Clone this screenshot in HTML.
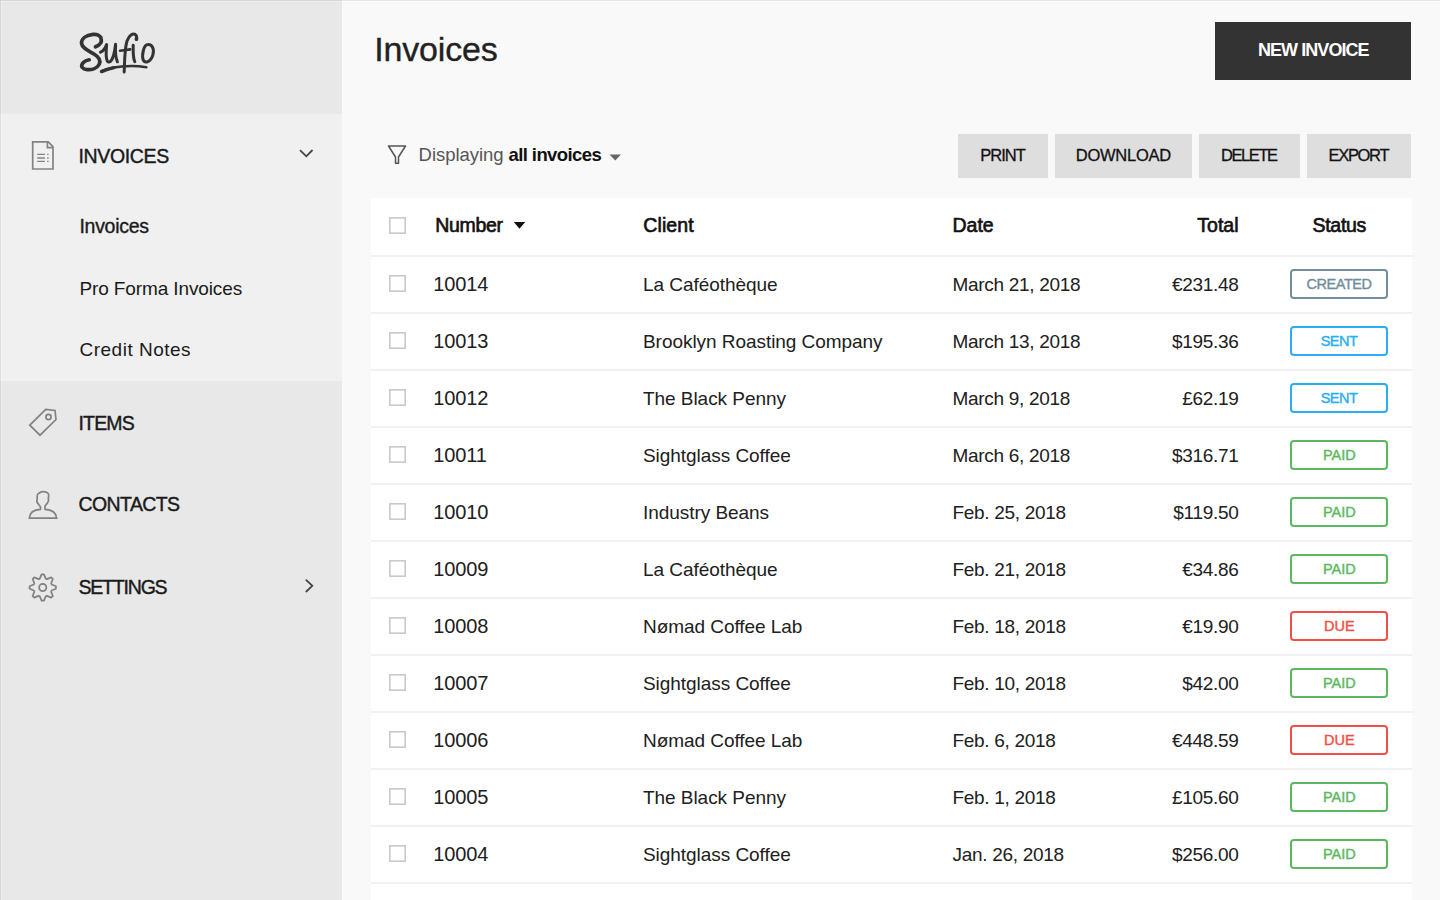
<!DOCTYPE html>
<html><head><meta charset="utf-8"><title>Invoices</title>
<style>
html,body{margin:0;padding:0;}
body{width:1440px;height:900px;position:relative;overflow:hidden;background:#f9f9f9;font-family:"Liberation Sans", sans-serif;}
.t{position:absolute;white-space:nowrap;}
b{font-weight:700;}
</style></head><body>
<div style="position:absolute;left:0px;top:0px;width:342px;height:900px;background:#e8e8e8;"></div>
<div style="position:absolute;left:0px;top:114px;width:342px;height:267px;background:#f0f0f0;"></div>
<div style="position:absolute;left:371px;top:198px;width:1041px;height:702px;background:#ffffff;"></div>
<svg style="position:absolute;left:0;top:0" width="342" height="114" viewBox="0 0 342 114">
<g fill="none" stroke="#333" stroke-linecap="round" stroke-linejoin="round">
<path d="M95.5 46.8 C 99.5 45.2, 102 42.5, 101.2 39 C 100.5 35.2, 96.5 34, 93 34.4 C 86 35.2, 81.2 38.5, 81.6 43.5 C 82 48.2, 89 51, 94 54 C 99 57, 101 60.5, 99.2 64.2 C 97.2 68.2, 92 70, 87 69.6 C 82.5 69.2, 80.5 66.5, 82.5 63.5 C 84 61.3, 87 60.2, 89.2 59.8" stroke-width="3.7"/>
<path d="M100.5 52.2 C 103 51.2, 105 48.5, 106.6 44.6 C 106.2 50, 105.4 57.5, 107.2 60.8 C 109.2 63.8, 113.5 62, 115.6 44.2 C 115.2 52, 115.6 58, 117.4 61.8" stroke-width="3"/>
<path d="M124.2 72 C 124.6 60, 124.6 48.5, 127 41 C 129 35, 133 33.2, 135.2 34.4 C 136.8 35.4, 136.8 38, 136.6 39.2" stroke-width="3"/>
<circle cx="136.4" cy="39" r="1.9" fill="#333" stroke="none"/>
<path d="M120 50.8 L130.2 49.4" stroke-width="2.6"/>
<path d="M133.2 45.2 C 133 52, 133 58, 134.8 61.6" stroke-width="3"/>
<path d="M148 44.6 C 143.5 44.6, 141.6 55.5, 143.2 60 C 145 63.6, 150.5 62.2, 152.8 55.2 C 154.6 49.4, 152.4 44.4, 148 44.6 Z" stroke-width="3"/>
<path d="M101.5 71.2 C 112 66.6, 130 64.6, 146.4 67.2" stroke-width="2.4"/>
<path d="M101.5 71.6 C 106 69.4, 110 68.4, 114 67.6" stroke-width="3.4"/>
</g></svg>
<div class="t" style="left:78.5px;top:147.25px;font-size:19.5px;line-height:19.5px;font-weight:400;color:#1a1a1a;letter-spacing:-0.35px;-webkit-text-stroke:0.4px #1a1a1a;">INVOICES</div>
<div class="t" style="left:79.5px;top:217.05px;font-size:19.5px;line-height:19.5px;font-weight:400;color:#1a1a1a;letter-spacing:-0.3px;-webkit-text-stroke:0.35px #1a1a1a;">Invoices</div>
<div class="t" style="left:79.5px;top:278.8px;font-size:19px;line-height:19px;font-weight:400;color:#1a1a1a;letter-spacing:-0.12px;">Pro Forma Invoices</div>
<div class="t" style="left:79.5px;top:340.0px;font-size:19px;line-height:19px;font-weight:400;color:#1a1a1a;letter-spacing:0.5px;">Credit Notes</div>
<div class="t" style="left:78.5px;top:414.25px;font-size:19.5px;line-height:19.5px;font-weight:400;color:#1a1a1a;letter-spacing:-0.85px;-webkit-text-stroke:0.4px #1a1a1a;">ITEMS</div>
<div class="t" style="left:78.5px;top:495.25px;font-size:19.5px;line-height:19.5px;font-weight:400;color:#1a1a1a;letter-spacing:-0.6px;-webkit-text-stroke:0.4px #1a1a1a;">CONTACTS</div>
<div class="t" style="left:78.5px;top:577.75px;font-size:19.5px;line-height:19.5px;font-weight:400;color:#1a1a1a;letter-spacing:-1.2px;-webkit-text-stroke:0.4px #1a1a1a;">SETTINGS</div>
<svg style="position:absolute;left:0;top:0" width="342" height="620" viewBox="0 0 342 620">
<g fill="none" stroke="#828282" stroke-width="1.7" stroke-linejoin="miter">
<path d="M32.7 141.8 H48.2 L53 146.6 V169 H32.7 Z"/>
<path d="M47.4 141.8 V147.6 H53"/>
<path d="M37.2 154.4 H44.9 M37.2 158 H44.9 M37.2 161.4 H44.9" stroke-width="1.3"/>
<path d="M47.2 154.4 H48.6 M47.2 158 H48.6 M47.2 161.4 H48.6" stroke-width="1.3"/>
<path d="M29.8 425.2 L45.7 409.3 L55 410.5 L56 419.5 L40 435.2 Z"/>
<circle cx="48.5" cy="417" r="2.6"/>
<path d="M29.3 518.2 H56.7 C56 512, 51 509.5, 45 509.3 V506 C47 504, 48.5 502, 48.6 500 C48 498.5, 48.7 497, 48.7 495 C48.7 493, 46 491.6, 43 491.6 C40.5 491.6, 39.8 493, 38.5 493.5 C37 494, 37 496, 37.2 498 C37.3 500, 36.5 501, 37 502 C38 504, 40 506, 40.5 507 V509.3 C34.5 509.5, 29.8 512, 29.3 518.2 Z"/>
<path d="M300.5 150.7 L306.3 156.3 L312 150.5" stroke="#444" stroke-width="1.8" stroke-linecap="round"/>
<path d="M306.3 580.2 L312.3 585.8 L306.3 591.5" stroke="#444" stroke-width="1.8" stroke-linecap="round"/>
</g></svg>
<svg style="position:absolute;left:0;top:560" width="80" height="60" viewBox="0 560 80 60">
<g fill="none" stroke="#828282" stroke-width="1.75" stroke-linejoin="round">
<path d="M39.79 578.58 L41.56 574.35 L43.94 574.35 L45.71 578.58 L46.97 579.10 L51.21 577.37 L52.88 579.04 L51.15 583.28 L51.67 584.54 L55.90 586.31 L55.90 588.69 L51.67 590.46 L51.15 591.72 L52.88 595.96 L51.21 597.63 L46.97 595.90 L45.71 596.42 L43.94 600.65 L41.56 600.65 L39.79 596.42 L38.53 595.90 L34.29 597.63 L32.62 595.96 L34.35 591.72 L33.83 590.46 L29.60 588.69 L29.60 586.31 L33.83 584.54 L34.35 583.28 L32.62 579.04 L34.29 577.37 L38.53 579.10 Z"/>
<circle cx="42.75" cy="587.5" r="3.6"/>
</g></svg>
<div class="t" style="left:374.2px;top:32.2px;font-size:34px;line-height:34px;font-weight:400;color:#222;letter-spacing:-0.15px;-webkit-text-stroke:0.35px #222;">Invoices</div>
<div style="position:absolute;left:1215px;top:22px;width:196px;height:58px;background:#333333;"></div>
<div class="t" style="left:1013.3px;width:600px;text-align:center;top:41.0px;font-size:18px;line-height:18px;font-weight:700;color:#fff;letter-spacing:-0.93px;">NEW INVOICE</div>
<svg style="position:absolute;left:380px;top:130px" width="40" height="40" viewBox="380 130 40 40">
<path d="M388.5 146 H405.5 L398.5 157 V163.2 H395.5 V157 Z" fill="none" stroke="#555" stroke-width="1.5" stroke-linejoin="round"/>
</svg>
<div class="t" style="left:418.6px;top:146.45px;font-size:18.5px;line-height:18.5px;font-weight:400;color:#555;letter-spacing:0px;"><span style="letter-spacing:-0.05px">Displaying </span><b style="color:#111;letter-spacing:-0.6px">all invoices</b></div>
<svg style="position:absolute;left:609px;top:154.3px" width="13" height="8" viewBox="0 0 13 8"><path d="M0.5 0.5 H12 L6.25 6.5 Z" fill="#666"/></svg>
<div style="position:absolute;left:958px;top:134px;width:90px;height:44px;background:#dedede;"></div>
<div class="t" style="left:702.5px;width:600px;text-align:center;top:147.05px;font-size:16.5px;line-height:16.5px;font-weight:400;color:#111;letter-spacing:-1.0px;-webkit-text-stroke:0.3px #111;">PRINT</div>
<div style="position:absolute;left:1055px;top:134px;width:137px;height:44px;background:#dedede;"></div>
<div class="t" style="left:823.375px;width:600px;text-align:center;top:147.05px;font-size:16.5px;line-height:16.5px;font-weight:400;color:#111;letter-spacing:-0.25px;-webkit-text-stroke:0.3px #111;">DOWNLOAD</div>
<div style="position:absolute;left:1199px;top:134px;width:101px;height:44px;background:#dedede;"></div>
<div class="t" style="left:948.8px;width:600px;text-align:center;top:147.05px;font-size:16.5px;line-height:16.5px;font-weight:400;color:#111;letter-spacing:-1.4px;-webkit-text-stroke:0.3px #111;">DELETE</div>
<div style="position:absolute;left:1307px;top:134px;width:104px;height:44px;background:#dedede;"></div>
<div class="t" style="left:1058.35px;width:600px;text-align:center;top:147.05px;font-size:16.5px;line-height:16.5px;font-weight:400;color:#111;letter-spacing:-1.3px;-webkit-text-stroke:0.3px #111;">EXPORT</div>
<div style="position:absolute;left:371px;top:255px;width:1041px;height:2px;background:#f1f1f1;"></div>
<div style="position:absolute;left:371px;top:312px;width:1041px;height:2px;background:#f1f1f1;"></div>
<div style="position:absolute;left:371px;top:369px;width:1041px;height:2px;background:#f1f1f1;"></div>
<div style="position:absolute;left:371px;top:426px;width:1041px;height:2px;background:#f1f1f1;"></div>
<div style="position:absolute;left:371px;top:483px;width:1041px;height:2px;background:#f1f1f1;"></div>
<div style="position:absolute;left:371px;top:540px;width:1041px;height:2px;background:#f1f1f1;"></div>
<div style="position:absolute;left:371px;top:597px;width:1041px;height:2px;background:#f1f1f1;"></div>
<div style="position:absolute;left:371px;top:654px;width:1041px;height:2px;background:#f1f1f1;"></div>
<div style="position:absolute;left:371px;top:711px;width:1041px;height:2px;background:#f1f1f1;"></div>
<div style="position:absolute;left:371px;top:768px;width:1041px;height:2px;background:#f1f1f1;"></div>
<div style="position:absolute;left:371px;top:825px;width:1041px;height:2px;background:#f1f1f1;"></div>
<div style="position:absolute;left:371px;top:882px;width:1041px;height:2px;background:#f1f1f1;"></div>
<svg style="position:absolute;left:389px;top:217px" width="17" height="17" viewBox="0 0 17 17"><rect x="0.8" y="0.8" width="15.4" height="15.4" fill="none" stroke="#c9c9c9" stroke-width="1.6"/></svg>
<div class="t" style="left:435.3px;top:215.55px;font-size:19.5px;line-height:19.5px;font-weight:400;color:#111;letter-spacing:-0.35px;-webkit-text-stroke:0.65px #111;">Number</div>
<svg style="position:absolute;left:513px;top:221px" width="13" height="9" viewBox="0 0 13 9"><path d="M0.8 1 H12.2 L6.5 7.8 Z" fill="#111"/></svg>
<div class="t" style="left:643.3px;top:215.55px;font-size:19.5px;line-height:19.5px;font-weight:400;color:#111;letter-spacing:0.1px;-webkit-text-stroke:0.65px #111;">Client</div>
<div class="t" style="left:952.5px;top:215.55px;font-size:19.5px;line-height:19.5px;font-weight:400;color:#111;letter-spacing:0px;-webkit-text-stroke:0.65px #111;">Date</div>
<div class="t" style="right:201.5px;top:215.55px;font-size:19.5px;line-height:19.5px;font-weight:400;color:#111;letter-spacing:0px;-webkit-text-stroke:0.65px #111;">Total</div>
<div class="t" style="left:1039.3px;width:600px;text-align:center;top:215.55px;font-size:19.5px;line-height:19.5px;font-weight:400;color:#111;letter-spacing:-0.3px;-webkit-text-stroke:0.65px #111;">Status</div>
<svg style="position:absolute;left:389px;top:275px" width="17" height="17" viewBox="0 0 17 17"><rect x="0.8" y="0.8" width="15.4" height="15.4" fill="none" stroke="#c9c9c9" stroke-width="1.6"/></svg>
<div class="t" style="left:433.3px;top:273.75px;font-size:20px;line-height:20px;font-weight:400;color:#202020;letter-spacing:-0.15px;">10014</div>
<div class="t" style="left:643px;top:274.75px;font-size:19px;line-height:19px;font-weight:400;color:#202020;letter-spacing:-0.05px;">La Caféothèque</div>
<div class="t" style="left:952.5px;top:274.75px;font-size:19px;line-height:19px;font-weight:400;color:#202020;letter-spacing:-0.3px;">March 21, 2018</div>
<div class="t" style="right:201.5px;top:274.75px;font-size:19px;line-height:19px;font-weight:400;color:#202020;letter-spacing:-0.3px;">€231.48</div>
<div style="position:absolute;left:1290px;top:269px;width:98px;height:30px;background:transparent;box-sizing:border-box;border:2px solid #748d9b;border-radius:4px;"></div>
<div class="t" style="left:1039.075px;width:600px;text-align:center;top:277.2px;font-size:14.5px;line-height:14.5px;font-weight:400;color:#748d9b;letter-spacing:-0.45px;-webkit-text-stroke:0.4px #748d9b;">CREATED</div>
<svg style="position:absolute;left:389px;top:332px" width="17" height="17" viewBox="0 0 17 17"><rect x="0.8" y="0.8" width="15.4" height="15.4" fill="none" stroke="#c9c9c9" stroke-width="1.6"/></svg>
<div class="t" style="left:433.3px;top:330.75px;font-size:20px;line-height:20px;font-weight:400;color:#202020;letter-spacing:-0.15px;">10013</div>
<div class="t" style="left:643px;top:331.75px;font-size:19px;line-height:19px;font-weight:400;color:#202020;letter-spacing:-0.05px;">Brooklyn Roasting Company</div>
<div class="t" style="left:952.5px;top:331.75px;font-size:19px;line-height:19px;font-weight:400;color:#202020;letter-spacing:-0.3px;">March 13, 2018</div>
<div class="t" style="right:201.5px;top:331.75px;font-size:19px;line-height:19px;font-weight:400;color:#202020;letter-spacing:-0.3px;">$195.36</div>
<div style="position:absolute;left:1290px;top:326px;width:98px;height:30px;background:transparent;box-sizing:border-box;border:2px solid #28aef2;border-radius:4px;"></div>
<div class="t" style="left:1039.05px;width:600px;text-align:center;top:334.2px;font-size:14.5px;line-height:14.5px;font-weight:400;color:#28aef2;letter-spacing:-0.5px;-webkit-text-stroke:0.4px #28aef2;">SENT</div>
<svg style="position:absolute;left:389px;top:389px" width="17" height="17" viewBox="0 0 17 17"><rect x="0.8" y="0.8" width="15.4" height="15.4" fill="none" stroke="#c9c9c9" stroke-width="1.6"/></svg>
<div class="t" style="left:433.3px;top:387.75px;font-size:20px;line-height:20px;font-weight:400;color:#202020;letter-spacing:-0.15px;">10012</div>
<div class="t" style="left:643px;top:388.75px;font-size:19px;line-height:19px;font-weight:400;color:#202020;letter-spacing:-0.05px;">The Black Penny</div>
<div class="t" style="left:952.5px;top:388.75px;font-size:19px;line-height:19px;font-weight:400;color:#202020;letter-spacing:-0.3px;">March 9, 2018</div>
<div class="t" style="right:201.5px;top:388.75px;font-size:19px;line-height:19px;font-weight:400;color:#202020;letter-spacing:-0.3px;">£62.19</div>
<div style="position:absolute;left:1290px;top:383px;width:98px;height:30px;background:transparent;box-sizing:border-box;border:2px solid #28aef2;border-radius:4px;"></div>
<div class="t" style="left:1039.05px;width:600px;text-align:center;top:391.2px;font-size:14.5px;line-height:14.5px;font-weight:400;color:#28aef2;letter-spacing:-0.5px;-webkit-text-stroke:0.4px #28aef2;">SENT</div>
<svg style="position:absolute;left:389px;top:446px" width="17" height="17" viewBox="0 0 17 17"><rect x="0.8" y="0.8" width="15.4" height="15.4" fill="none" stroke="#c9c9c9" stroke-width="1.6"/></svg>
<div class="t" style="left:433.3px;top:444.75px;font-size:20px;line-height:20px;font-weight:400;color:#202020;letter-spacing:-0.15px;">10011</div>
<div class="t" style="left:643px;top:445.75px;font-size:19px;line-height:19px;font-weight:400;color:#202020;letter-spacing:-0.05px;">Sightglass Coffee</div>
<div class="t" style="left:952.5px;top:445.75px;font-size:19px;line-height:19px;font-weight:400;color:#202020;letter-spacing:-0.3px;">March 6, 2018</div>
<div class="t" style="right:201.5px;top:445.75px;font-size:19px;line-height:19px;font-weight:400;color:#202020;letter-spacing:-0.3px;">$316.71</div>
<div style="position:absolute;left:1290px;top:440px;width:98px;height:30px;background:transparent;box-sizing:border-box;border:2px solid #5cb860;border-radius:4px;"></div>
<div class="t" style="left:1039.3px;width:600px;text-align:center;top:448.2px;font-size:14.5px;line-height:14.5px;font-weight:400;color:#5cb860;letter-spacing:0px;-webkit-text-stroke:0.4px #5cb860;">PAID</div>
<svg style="position:absolute;left:389px;top:503px" width="17" height="17" viewBox="0 0 17 17"><rect x="0.8" y="0.8" width="15.4" height="15.4" fill="none" stroke="#c9c9c9" stroke-width="1.6"/></svg>
<div class="t" style="left:433.3px;top:501.75px;font-size:20px;line-height:20px;font-weight:400;color:#202020;letter-spacing:-0.15px;">10010</div>
<div class="t" style="left:643px;top:502.75px;font-size:19px;line-height:19px;font-weight:400;color:#202020;letter-spacing:-0.05px;">Industry Beans</div>
<div class="t" style="left:952.5px;top:502.75px;font-size:19px;line-height:19px;font-weight:400;color:#202020;letter-spacing:-0.3px;">Feb. 25, 2018</div>
<div class="t" style="right:201.5px;top:502.75px;font-size:19px;line-height:19px;font-weight:400;color:#202020;letter-spacing:-0.3px;">$119.50</div>
<div style="position:absolute;left:1290px;top:497px;width:98px;height:30px;background:transparent;box-sizing:border-box;border:2px solid #5cb860;border-radius:4px;"></div>
<div class="t" style="left:1039.3px;width:600px;text-align:center;top:505.20000000000005px;font-size:14.5px;line-height:14.5px;font-weight:400;color:#5cb860;letter-spacing:0px;-webkit-text-stroke:0.4px #5cb860;">PAID</div>
<svg style="position:absolute;left:389px;top:560px" width="17" height="17" viewBox="0 0 17 17"><rect x="0.8" y="0.8" width="15.4" height="15.4" fill="none" stroke="#c9c9c9" stroke-width="1.6"/></svg>
<div class="t" style="left:433.3px;top:558.75px;font-size:20px;line-height:20px;font-weight:400;color:#202020;letter-spacing:-0.15px;">10009</div>
<div class="t" style="left:643px;top:559.75px;font-size:19px;line-height:19px;font-weight:400;color:#202020;letter-spacing:-0.05px;">La Caféothèque</div>
<div class="t" style="left:952.5px;top:559.75px;font-size:19px;line-height:19px;font-weight:400;color:#202020;letter-spacing:-0.3px;">Feb. 21, 2018</div>
<div class="t" style="right:201.5px;top:559.75px;font-size:19px;line-height:19px;font-weight:400;color:#202020;letter-spacing:-0.3px;">€34.86</div>
<div style="position:absolute;left:1290px;top:554px;width:98px;height:30px;background:transparent;box-sizing:border-box;border:2px solid #5cb860;border-radius:4px;"></div>
<div class="t" style="left:1039.3px;width:600px;text-align:center;top:562.2px;font-size:14.5px;line-height:14.5px;font-weight:400;color:#5cb860;letter-spacing:0px;-webkit-text-stroke:0.4px #5cb860;">PAID</div>
<svg style="position:absolute;left:389px;top:617px" width="17" height="17" viewBox="0 0 17 17"><rect x="0.8" y="0.8" width="15.4" height="15.4" fill="none" stroke="#c9c9c9" stroke-width="1.6"/></svg>
<div class="t" style="left:433.3px;top:615.75px;font-size:20px;line-height:20px;font-weight:400;color:#202020;letter-spacing:-0.15px;">10008</div>
<div class="t" style="left:643px;top:616.75px;font-size:19px;line-height:19px;font-weight:400;color:#202020;letter-spacing:-0.05px;">Nømad Coffee Lab</div>
<div class="t" style="left:952.5px;top:616.75px;font-size:19px;line-height:19px;font-weight:400;color:#202020;letter-spacing:-0.3px;">Feb. 18, 2018</div>
<div class="t" style="right:201.5px;top:616.75px;font-size:19px;line-height:19px;font-weight:400;color:#202020;letter-spacing:-0.3px;">€19.90</div>
<div style="position:absolute;left:1290px;top:611px;width:98px;height:30px;background:transparent;box-sizing:border-box;border:2px solid #f04e48;border-radius:4px;"></div>
<div class="t" style="left:1039.3px;width:600px;text-align:center;top:619.2px;font-size:14.5px;line-height:14.5px;font-weight:400;color:#f04e48;letter-spacing:0px;-webkit-text-stroke:0.4px #f04e48;">DUE</div>
<svg style="position:absolute;left:389px;top:674px" width="17" height="17" viewBox="0 0 17 17"><rect x="0.8" y="0.8" width="15.4" height="15.4" fill="none" stroke="#c9c9c9" stroke-width="1.6"/></svg>
<div class="t" style="left:433.3px;top:672.75px;font-size:20px;line-height:20px;font-weight:400;color:#202020;letter-spacing:-0.15px;">10007</div>
<div class="t" style="left:643px;top:673.75px;font-size:19px;line-height:19px;font-weight:400;color:#202020;letter-spacing:-0.05px;">Sightglass Coffee</div>
<div class="t" style="left:952.5px;top:673.75px;font-size:19px;line-height:19px;font-weight:400;color:#202020;letter-spacing:-0.3px;">Feb. 10, 2018</div>
<div class="t" style="right:201.5px;top:673.75px;font-size:19px;line-height:19px;font-weight:400;color:#202020;letter-spacing:-0.3px;">$42.00</div>
<div style="position:absolute;left:1290px;top:668px;width:98px;height:30px;background:transparent;box-sizing:border-box;border:2px solid #5cb860;border-radius:4px;"></div>
<div class="t" style="left:1039.3px;width:600px;text-align:center;top:676.2px;font-size:14.5px;line-height:14.5px;font-weight:400;color:#5cb860;letter-spacing:0px;-webkit-text-stroke:0.4px #5cb860;">PAID</div>
<svg style="position:absolute;left:389px;top:731px" width="17" height="17" viewBox="0 0 17 17"><rect x="0.8" y="0.8" width="15.4" height="15.4" fill="none" stroke="#c9c9c9" stroke-width="1.6"/></svg>
<div class="t" style="left:433.3px;top:729.75px;font-size:20px;line-height:20px;font-weight:400;color:#202020;letter-spacing:-0.15px;">10006</div>
<div class="t" style="left:643px;top:730.75px;font-size:19px;line-height:19px;font-weight:400;color:#202020;letter-spacing:-0.05px;">Nømad Coffee Lab</div>
<div class="t" style="left:952.5px;top:730.75px;font-size:19px;line-height:19px;font-weight:400;color:#202020;letter-spacing:-0.3px;">Feb. 6, 2018</div>
<div class="t" style="right:201.5px;top:730.75px;font-size:19px;line-height:19px;font-weight:400;color:#202020;letter-spacing:-0.3px;">€448.59</div>
<div style="position:absolute;left:1290px;top:725px;width:98px;height:30px;background:transparent;box-sizing:border-box;border:2px solid #f04e48;border-radius:4px;"></div>
<div class="t" style="left:1039.3px;width:600px;text-align:center;top:733.2px;font-size:14.5px;line-height:14.5px;font-weight:400;color:#f04e48;letter-spacing:0px;-webkit-text-stroke:0.4px #f04e48;">DUE</div>
<svg style="position:absolute;left:389px;top:788px" width="17" height="17" viewBox="0 0 17 17"><rect x="0.8" y="0.8" width="15.4" height="15.4" fill="none" stroke="#c9c9c9" stroke-width="1.6"/></svg>
<div class="t" style="left:433.3px;top:786.75px;font-size:20px;line-height:20px;font-weight:400;color:#202020;letter-spacing:-0.15px;">10005</div>
<div class="t" style="left:643px;top:787.75px;font-size:19px;line-height:19px;font-weight:400;color:#202020;letter-spacing:-0.05px;">The Black Penny</div>
<div class="t" style="left:952.5px;top:787.75px;font-size:19px;line-height:19px;font-weight:400;color:#202020;letter-spacing:-0.3px;">Feb. 1, 2018</div>
<div class="t" style="right:201.5px;top:787.75px;font-size:19px;line-height:19px;font-weight:400;color:#202020;letter-spacing:-0.3px;">£105.60</div>
<div style="position:absolute;left:1290px;top:782px;width:98px;height:30px;background:transparent;box-sizing:border-box;border:2px solid #5cb860;border-radius:4px;"></div>
<div class="t" style="left:1039.3px;width:600px;text-align:center;top:790.2px;font-size:14.5px;line-height:14.5px;font-weight:400;color:#5cb860;letter-spacing:0px;-webkit-text-stroke:0.4px #5cb860;">PAID</div>
<svg style="position:absolute;left:389px;top:845px" width="17" height="17" viewBox="0 0 17 17"><rect x="0.8" y="0.8" width="15.4" height="15.4" fill="none" stroke="#c9c9c9" stroke-width="1.6"/></svg>
<div class="t" style="left:433.3px;top:843.75px;font-size:20px;line-height:20px;font-weight:400;color:#202020;letter-spacing:-0.15px;">10004</div>
<div class="t" style="left:643px;top:844.75px;font-size:19px;line-height:19px;font-weight:400;color:#202020;letter-spacing:-0.05px;">Sightglass Coffee</div>
<div class="t" style="left:952.5px;top:844.75px;font-size:19px;line-height:19px;font-weight:400;color:#202020;letter-spacing:-0.3px;">Jan. 26, 2018</div>
<div class="t" style="right:201.5px;top:844.75px;font-size:19px;line-height:19px;font-weight:400;color:#202020;letter-spacing:-0.3px;">$256.00</div>
<div style="position:absolute;left:1290px;top:839px;width:98px;height:30px;background:transparent;box-sizing:border-box;border:2px solid #5cb860;border-radius:4px;"></div>
<div class="t" style="left:1039.3px;width:600px;text-align:center;top:847.2px;font-size:14.5px;line-height:14.5px;font-weight:400;color:#5cb860;letter-spacing:0px;-webkit-text-stroke:0.4px #5cb860;">PAID</div>
<div style="position:absolute;left:0px;top:0px;width:1440px;height:1px;background:rgba(0,0,0,0.075);"></div>
<div style="position:absolute;left:0px;top:1px;width:1px;height:899px;background:rgba(0,0,0,0.075);"></div>
<div style="position:absolute;left:1px;top:1px;width:1439px;height:1px;background:rgba(255,255,255,0.35);"></div>
<div style="position:absolute;left:1px;top:2px;width:1px;height:898px;background:rgba(255,255,255,0.35);"></div>
</body></html>
